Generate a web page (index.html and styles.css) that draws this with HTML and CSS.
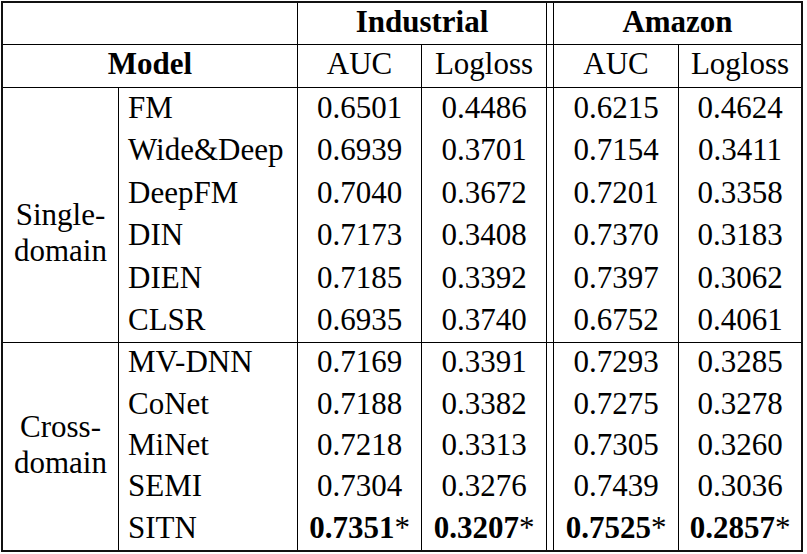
FILE: index.html
```html
<!DOCTYPE html>
<html lang="en">
<head>
<meta charset="utf-8">
<title>Results table</title>
<link rel="stylesheet" href="styles.css">
</head>
<body>
<div class="results">
  <div class="cell head span-model top"></div>
  <div class="cell head bold num span-2 top">Industrial</div>
  <div class="cell gap top"></div>
  <div class="cell head bold num span-2 top last">Amazon</div>

  <div class="cell head bold span-model top">Model</div>
  <div class="cell head num top">AUC</div>
  <div class="cell head num top">Logloss</div>
  <div class="cell gap top"></div>
  <div class="cell head num top">AUC</div>
  <div class="cell head num top last">Logloss</div>

  <div class="cell group group-single">Single-<br>domain</div>
  <div class="gap gap-single"></div>
  <div class="cell name">FM</div><div class="cell num">0.6501</div><div class="cell num">0.4486</div><div class="cell num c5">0.6215</div><div class="cell num last">0.4624</div>
  <div class="cell name">Wide&amp;Deep</div><div class="cell num">0.6939</div><div class="cell num">0.3701</div><div class="cell num c5">0.7154</div><div class="cell num last">0.3411</div>
  <div class="cell name">DeepFM</div><div class="cell num">0.7040</div><div class="cell num">0.3672</div><div class="cell num c5">0.7201</div><div class="cell num last">0.3358</div>
  <div class="cell name">DIN</div><div class="cell num">0.7173</div><div class="cell num">0.3408</div><div class="cell num c5">0.7370</div><div class="cell num last">0.3183</div>
  <div class="cell name">DIEN</div><div class="cell num">0.7185</div><div class="cell num">0.3392</div><div class="cell num c5">0.7397</div><div class="cell num last">0.3062</div>
  <div class="cell name end">CLSR</div><div class="cell num end">0.6935</div><div class="cell num end">0.3740</div><div class="cell num c5 end">0.6752</div><div class="cell num last end">0.4061</div>

  <div class="cell group group-cross">Cross-<br>domain</div>
  <div class="gap gap-cross"></div>
  <div class="cell name">MV-DNN</div><div class="cell num">0.7169</div><div class="cell num">0.3391</div><div class="cell num c5">0.7293</div><div class="cell num last">0.3285</div>
  <div class="cell name">CoNet</div><div class="cell num">0.7188</div><div class="cell num">0.3382</div><div class="cell num c5">0.7275</div><div class="cell num last">0.3278</div>
  <div class="cell name">MiNet</div><div class="cell num">0.7218</div><div class="cell num">0.3313</div><div class="cell num c5">0.7305</div><div class="cell num last">0.3260</div>
  <div class="cell name">SEMI</div><div class="cell num">0.7304</div><div class="cell num">0.3276</div><div class="cell num c5">0.7439</div><div class="cell num last">0.3036</div>
  <div class="cell name">SITN</div><div class="cell num"><b>0.7351</b>*</div><div class="cell num"><b>0.3207</b>*</div><div class="cell num c5"><b>0.7525</b>*</div><div class="cell num last"><b>0.2857</b>*</div>
</div>
</body>
</html>
```
FILE: styles.css
```css
html, body {
  margin: 0;
  padding: 0;
  background: #fff;
}

body {
  font-family: "Liberation Serif", serif;
  font-size: 31px;
  color: #000;
}

.results {
  font-family: "Liberation Serif", serif;
  margin: 1px 0 0 1px;
  width: 802px;
  box-sizing: border-box;
  border: 2px solid #111;
  display: grid;
  grid-template-columns: 116px 179px 124px 125px 7px 125px 122px;
  grid-template-rows: 42px 43px repeat(6, 42.5px) repeat(5, 41.4px);
}

.cell {
  box-sizing: border-box;
  display: flex;
  align-items: center;
  border-right: 1px solid #000;
  padding-bottom: 3px;
  line-height: 1.1;
  white-space: nowrap;
  font-family: "Liberation Serif", serif;
}

.cell.last {
  border-right: none;
}

.top {
  border-bottom: 1px solid #000;
}

.span-model {
  grid-column: span 2;
}

.span-2 {
  grid-column: span 2;
}

.head {
  justify-content: center;
}

.bold {
  font-weight: bold;
}

.num {
  justify-content: center;
}

.name {
  padding-left: 9px;
}

.gap {
  box-sizing: border-box;
  border-right: 1px solid #000;
}

.gap.top {
  border-bottom: 1px solid #000;
}

.c5 {
  grid-column: 6;
}

.end {
  border-bottom: 1px solid #000;
}

.group {
  grid-column: 1;
  justify-content: center;
  text-align: center;
  line-height: 36px;
}

.group-single {
  grid-row: 3 / span 6;
  border-bottom: 1px solid #000;
  padding-top: 38px;
}

.group-cross {
  grid-row: 9 / span 5;
}

.gap-single {
  grid-column: 5;
  grid-row: 3 / span 6;
  border-bottom: 1px solid #000;
}

.gap-cross {
  grid-column: 5;
  grid-row: 9 / span 5;
}

b {
  font-weight: bold;
}
```
